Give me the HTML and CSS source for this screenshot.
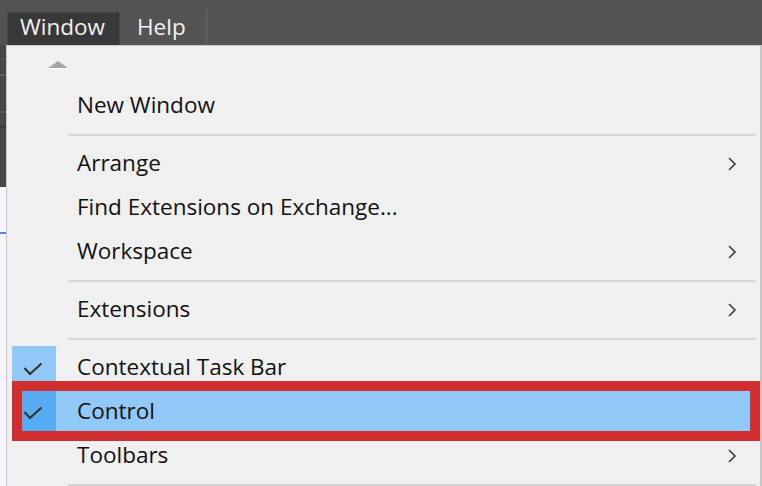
FILE: index.html
```html
<!DOCTYPE html>
<html>
<head>
<meta charset="utf-8">
<link rel="stylesheet" href="styles.css">
</head>
<body>
<div class="screen">
  <div class="menubar">
    <div class="mb-item active">Window</div>
    <div class="mb-item help">Help</div>
    <div class="mb-sep"></div>
  </div>
  <div class="main">
    <div class="leftstrip"></div>
    <div class="menu">
      <div class="scroll"><span class="uparrow"></span></div>
      <div class="row"><span class="check"></span><span class="label">New Window</span></div>
      <div class="sep"></div>
      <div class="row"><span class="check"></span><span class="label">Arrange</span><svg class="chev" viewBox="0 0 10 16" width="10" height="16"><path d="M2 2 L8 8 L2 14" fill="none" stroke="#3c3c3c" stroke-width="1.6"/></svg></div>
      <div class="row"><span class="check"></span><span class="label">Find Extensions on Exchange...</span></div>
      <div class="row"><span class="check"></span><span class="label">Workspace</span><svg class="chev" viewBox="0 0 10 16" width="10" height="16"><path d="M2 2 L8 8 L2 14" fill="none" stroke="#3c3c3c" stroke-width="1.6"/></svg></div>
      <div class="sep"></div>
      <div class="row"><span class="check"></span><span class="label">Extensions</span><svg class="chev" viewBox="0 0 10 16" width="10" height="16"><path d="M2 2 L8 8 L2 14" fill="none" stroke="#3c3c3c" stroke-width="1.6"/></svg></div>
      <div class="sep"></div>
      <div class="row"><span class="check on"><svg viewBox="0 0 20 14" width="20" height="14"><path d="M1.5 6 L7 12 L18.5 1.5" fill="none" stroke="#333" stroke-width="2.2"/></svg></span><span class="label">Contextual Task Bar</span></div>
      <div class="row selected"><span class="check on"><svg viewBox="0 0 20 14" width="20" height="14"><path d="M1.5 6 L7 12 L18.5 1.5" fill="none" stroke="#333" stroke-width="2.2"/></svg></span><span class="label">Control</span></div>
      <div class="row"><span class="check"></span><span class="label">Toolbars</span><svg class="chev" viewBox="0 0 10 16" width="10" height="16"><path d="M2 2 L8 8 L2 14" fill="none" stroke="#3c3c3c" stroke-width="1.6"/></svg></div>
      <div class="sep"></div>
    </div>
  </div>
  <div class="annot"></div>
</div>
</body>
</html>
```
FILE: styles.css
```css
* { box-sizing: border-box; }
html, body { margin: 0; padding: 0; }
body {
  width: 762px;
  height: 486px;
  overflow: hidden;
  font-family: "Open Sans", "Noto Sans", sans-serif;
  background: #535353;
}
.screen {
  position: relative;
  width: 762px;
  height: 486px;
  display: flex;
  flex-direction: column;
}
.menubar {
  height: 45px;
  flex: none;
  background: #535353;
  display: flex;
  align-items: flex-end;
}
.mb-item {
  height: 33px;
  display: flex;
  align-items: center;
  font-size: 22.5px;
  color: #f2f2f2;
  padding: 0 0 3px 12px;
  line-height: 1;
}
.mb-item.active {
  margin-left: 7px;
  width: 113px;
  background: #383838;
  border: 1px solid #464646;
  border-bottom: none;
}
.mb-item.help {
  padding-left: 17px;
  width: 85px;
}
.mb-sep {
  width: 3px;
  height: 36px;
  background: #5c5c5c;
}
.main {
  flex: 1;
  display: flex;
  min-height: 0;
}
.leftstrip {
  width: 6px;
  flex: none;
  background:
    linear-gradient(#535353 0 0) 0 13px / 100% 2px no-repeat,
    linear-gradient(#5e5e5e 0 0) 0 29px / 100% 2px no-repeat,
    linear-gradient(#5e5e5e 0 0) 0 66px / 100% 2px no-repeat,
    linear-gradient(#3a3a3a 0 0) 0 81px / 100% 2px no-repeat,
    linear-gradient(#5a82e0 0 0) 0 187px / 100% 2px no-repeat,
    linear-gradient(#474747 0 0) 0 0 / 100% 142px no-repeat,
    #f4f6fa;
}
.menu {
  flex: 1;
  background: #f0f0f0;
  border-left: 1px solid #c4c4c4;
  border-top: 1px solid #cdcdcd;
  border-right: 2px solid #c6c6c6;
  display: flex;
  flex-direction: column;
}
.scroll {
  height: 38px;
  flex: none;
  display: flex;
  align-items: center;
  padding-left: 41px;
}
.uparrow {
  width: 0;
  height: 0;
  border-left: 10px solid transparent;
  border-right: 10px solid transparent;
  border-bottom: 7px solid #a4a4a4;
  margin-top: -2px;
  box-shadow: 0 1px 0 #ffffff;
}
.row {
  height: 44px;
  flex: none;
  display: flex;
  align-items: center;
  margin: 0 5px;
  padding-right: 18px;
}
.row.selected {
  background: #91c8f6;
}
.check {
  width: 44px;
  height: 44px;
  flex: none;
  display: flex;
  align-items: center;
  justify-content: center;
}
.check.on {
  background: #91c8f6;
}
.row.selected .check.on {
  background: #58acf6;
}
.check svg { margin-left: -2px; margin-top: 2px; }
.label {
  flex: 1;
  margin-left: 21px;
  font-size: 22.5px;
  color: #111;
  line-height: 1;
  white-space: nowrap;
  padding-bottom: 2px;
}
.chev { flex: none; }
.sep {
  height: 14px;
  flex: none;
  display: flex;
  align-items: center;
  margin: 0 4px 0 61px;
}
.sep::before {
  content: "";
  display: block;
  width: 100%;
  height: 2px;
  background: #d6d6d6;
}
.annot {
  position: absolute;
  left: 12px;
  top: 381px;
  width: 748px;
  height: 60px;
  border: 10px solid #d12f2f;
}
```
